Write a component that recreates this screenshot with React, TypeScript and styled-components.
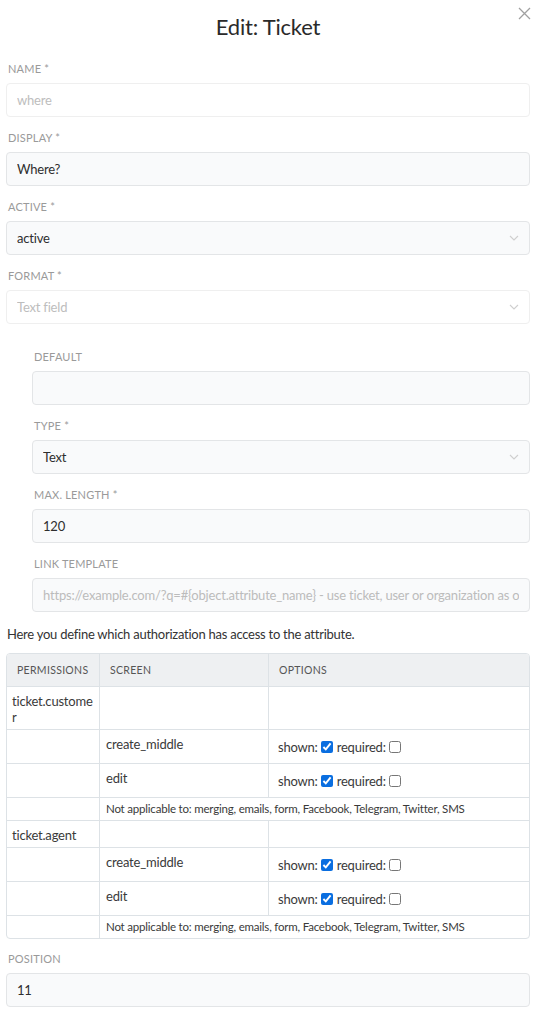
import React from "react";
import styled, { createGlobalStyle } from "styled-components";

const GlobalStyle = createGlobalStyle`
  html, body {
    margin: 0;
    padding: 0;
    background: #fff;
  }
  body {
    font-family: "Lato", "Open Sans", sans-serif;
    color: #333;
    -webkit-font-smoothing: antialiased;
  }
  * { box-sizing: border-box; }
`;

// Modal shell
const Modal = styled.div`
  position: relative;
  width: 541px;
  padding: 0 11px 20px 6px;
`;

const Header = styled.div`
  height: 61px;
  display: flex;
  align-items: flex-start;
  justify-content: center;
  padding-top: 13px;
`;

const Title = styled.h1`
  margin: 0;
  font-size: 22px;
  font-weight: 400;
  line-height: 28px;
  letter-spacing: -0.2px;
  color: #2a2a2a;
`;

const CloseButton = styled.button`
  position: absolute;
  top: 6px;
  right: 10px;
  width: 14px;
  height: 14px;
  padding: 0;
  border: none;
  background: none;
  color: #a0a0a0;
  cursor: pointer;
  display: flex;
  align-items: center;
  justify-content: center;
`;

// Form fields
const Field = styled.div`
  display: flex;
  flex-direction: column;
  margin-bottom: 13px;
`;

const Label = styled.label`
  display: block;
  padding-left: 2px;
  margin-bottom: 6px;
  font-size: 11px;
  line-height: 16px;
  letter-spacing: 0.2px;
  text-transform: uppercase;
  color: #9a9a9a;
`;

const Input = styled.input<{ $disabled?: boolean }>`
  width: 100%;
  height: 34px;
  padding: 0 10px;
  border-radius: 4px;
  font-family: inherit;
  font-size: 13px;
  letter-spacing: -0.2px;
  outline: none;
  border: 1px solid ${({ $disabled }) => ($disabled ? "#efefef" : "#e3e5e7")};
  background: ${({ $disabled }) => ($disabled ? "#fff" : "#f9fafb")};
  color: ${({ $disabled }) => ($disabled ? "#bdbdbd" : "#2e2e2e")};

  &::placeholder {
    color: #bcbcbc;
  }
`;

const SelectWrap = styled.div`
  position: relative;
`;

const Chevron = styled.svg`
  position: absolute;
  right: 11px;
  top: 14px;
  pointer-events: none;
`;

const Nested = styled.div`
  padding: 12px 0 0 26px;
`;

const Note = styled.p`
  margin: 0 0 10px 1px;
  font-size: 13px;
  line-height: 18px;
  letter-spacing: -0.25px;
  color: #333;
`;

// Permissions table
const Table = styled.table`
  width: 100%;
  table-layout: fixed;
  border-collapse: separate;
  border-spacing: 0;
  border: 1px solid #dde2e6;
  border-radius: 4px;
  overflow: hidden;
  margin-bottom: 12px;
`;

const Th = styled.th`
  height: 33px;
  padding: 0 10px;
  text-align: left;
  font-weight: 400;
  font-size: 10.5px;
  letter-spacing: 0.3px;
  text-transform: uppercase;
  color: #555;
  background: #eef0f2;
  border-bottom: 1px solid #dde2e6;
  border-right: 1px solid #dde2e6;

  &:last-child {
    border-right: none;
  }
`;

const Td = styled.td<{ $small?: boolean; $options?: boolean }>`
  vertical-align: top;
  padding: ${({ $options, $small }) =>
    $options ? "8px 6px 8px 9px" : $small ? "4px 6px 4px 6px" : "6px 6px 4px 5px"};
  font-size: ${({ $small }) => ($small ? "11.5px" : "13px")};
  line-height: ${({ $small }) => ($small ? "14px" : "16px")};
  letter-spacing: -0.2px;
  color: #3a3a3a;
  word-break: break-all;
  border-right: 1px solid #dde2e6;
  border-bottom: 1px solid #dde2e6;

  &:last-child {
    border-right: none;
  }

  tr:last-child > & {
    border-bottom: none;
  }
`;

const NameTd = styled(Td)`
  padding-right: 3px;
`;

const ScreenTd = styled(Td)`
  padding-left: 6px;
`;

const OptionLine = styled.div`
  display: flex;
  align-items: center;
  gap: 3px;
  height: 17px;
  white-space: nowrap;
`;

const Check = styled.input`
  width: 12px;
  height: 12px;
  margin: 0 1px 0 0;
  accent-color: #0a6ee0;
`;

const Chev = () => (
  <Chevron width="10" height="6" viewBox="0 0 10 6">
    <path d="M1 1l4 4 4-4" fill="none" stroke="#cfcfcf" strokeWidth="1.1" />
  </Chevron>
);

const Options = () => (
  <OptionLine>
    shown: <Check type="checkbox" defaultChecked /> required:{" "}
    <Check type="checkbox" />
  </OptionLine>
);

const PermissionGroup = ({ name }: { name: string }) => (
  <>
    <tr>
      <NameTd>{name}</NameTd>
      <ScreenTd />
      <Td />
    </tr>
    <tr>
      <Td />
      <ScreenTd>create_middle</ScreenTd>
      <Td $options>
        <Options />
      </Td>
    </tr>
    <tr>
      <Td />
      <ScreenTd>edit</ScreenTd>
      <Td $options>
        <Options />
      </Td>
    </tr>
    <tr>
      <Td $small />
      <Td $small colSpan={2}>
        Not applicable to: merging, emails, form, Facebook, Telegram, Twitter, SMS
      </Td>
    </tr>
  </>
);

export default function App() {
  return (
    <>
      <GlobalStyle />
      <Modal>
        <Header>
          <Title>Edit: Ticket</Title>
        </Header>
        <CloseButton aria-label="close">
          <svg width="13" height="13" viewBox="0 0 13 13">
            <path d="M1 1l11 11M12 1L1 12" stroke="currentColor" strokeWidth="1.3" />
          </svg>
        </CloseButton>

        <Field>
          <Label>Name *</Label>
          <Input $disabled defaultValue="where" readOnly />
        </Field>
        <Field>
          <Label>Display *</Label>
          <Input defaultValue="Where?" />
        </Field>
        <Field>
          <Label>Active *</Label>
          <SelectWrap>
            <Input defaultValue="active" readOnly />
            <Chev />
          </SelectWrap>
        </Field>
        <Field>
          <Label>Format *</Label>
          <SelectWrap>
            <Input $disabled defaultValue="Text field" readOnly />
            <Chev />
          </SelectWrap>
        </Field>

        <Nested>
          <Field>
            <Label>Default</Label>
            <Input />
          </Field>
          <Field>
            <Label>Type *</Label>
            <SelectWrap>
              <Input defaultValue="Text" readOnly />
              <Chev />
            </SelectWrap>
          </Field>
          <Field>
            <Label>Max. Length *</Label>
            <Input defaultValue="120" />
          </Field>
          <Field>
            <Label>Link Template</Label>
            <Input placeholder="https://example.com/?q=#{object.attribute_name} - use ticket, user or organization as object" />
          </Field>
        </Nested>

        <Note>Here you define which authorization has access to the attribute.</Note>

        <Table>
          <colgroup>
            <col style={{ width: 93 }} />
            <col style={{ width: 169 }} />
            <col />
          </colgroup>
          <thead>
            <tr>
              <Th>Permissions</Th>
              <Th>Screen</Th>
              <Th>Options</Th>
            </tr>
          </thead>
          <tbody>
            <PermissionGroup name="ticket.customer" />
            <PermissionGroup name="ticket.agent" />
          </tbody>
        </Table>

        <Field>
          <Label>Position</Label>
          <Input defaultValue="11" />
        </Field>
      </Modal>
    </>
  );
}
